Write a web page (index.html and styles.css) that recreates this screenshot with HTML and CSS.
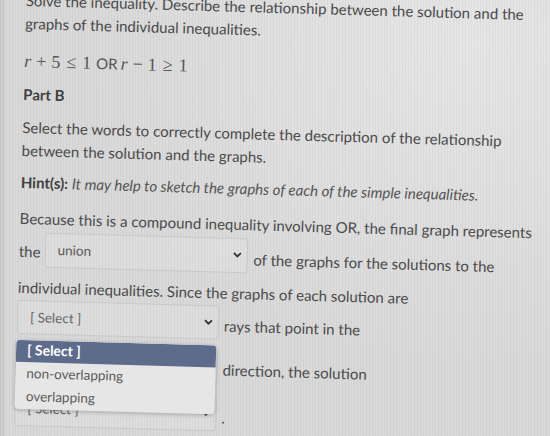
FILE: index.html
```html
<!DOCTYPE html>
<html lang="en">
<head>
<meta charset="utf-8">
<title>Part B</title>
<link rel="stylesheet" href="styles.css">
</head>
<body>
<div class="page">
  <p class="intro">Solve the inequality. Describe the relationship between the solution and the graphs of the individual inequalities.</p>
  <p class="math"><i>r</i><span class="op">+</span>5<span class="rel">≤</span>1<span class="or">OR</span><i>r</i><span class="op">−</span>1<span class="rel">≥</span>1</p>
  <h3 class="part">Part B</h3>
  <p class="instr">Select the words to correctly complete the description of the relationship between the solution and the graphs.</p>
  <p class="hint"><b>Hint(s):</b> <i>It may help to sketch the graphs of each of the simple inequalities.</i></p>
  <p class="because">Because this is a compound inequality involving OR, the final graph represents</p>
  <div class="row row1">
    <span class="lead">the</span>
    <div class="select sel1"><span>union</span><svg class="chev" width="9" height="6" viewBox="0 0 9 6"><polyline points="1,1 4.5,4.5 8,1" fill="none" stroke="#333" stroke-width="1.8"/></svg></div>
    <span class="after1">of the graphs for the solutions to the</span>
  </div>
  <p class="ind">individual inequalities. Since the graphs of each solution are</p>
  <div class="row row2">
    <div class="select-wrap">
      <div class="select"><span class="ph">[ Select ]</span><svg class="chev" width="9" height="6" viewBox="0 0 9 6"><polyline points="1,1 4.5,4.5 8,1" fill="none" stroke="#333" stroke-width="1.8"/></svg></div>
      <ul class="list">
        <li class="head">[ Select ]</li>
        <li>non-overlapping</li>
        <li>overlapping</li>
      </ul>
    </div>
    <span>rays that point in the</span>
  </div>
  <div class="row row3">
    <div class="select"><span class="ph">[ Select ]</span><svg class="chev" width="9" height="6" viewBox="0 0 9 6"><polyline points="1,1 4.5,4.5 8,1" fill="none" stroke="#333" stroke-width="1.8"/></svg></div>
    <span>direction, the solution</span>
  </div>
  <div class="row row4">
    <div class="select"><span class="ph">[ Select ]</span><svg class="chev" width="9" height="6" viewBox="0 0 9 6"><polyline points="1,1 4.5,4.5 8,1" fill="none" stroke="#333" stroke-width="1.8"/></svg></div>
    <span>.</span>
  </div>
</div>
</body>
</html>
```

FILE: styles.css
```css
html, body {
  margin: 0;
  height: 100%;
}

body {
  overflow: hidden;
  background-color: #d9d9d9;
  background-image:
    linear-gradient(90deg, rgba(0,0,0,0.05) 0 5px, transparent 5px),
    repeating-linear-gradient(90deg, rgba(0,0,0,0.035) 0 1px, transparent 1px 3px),
    radial-gradient(ellipse at 85% 10%, rgba(255,255,255,0.35), transparent 60%);
  font-family: Lato, "Noto Sans", sans-serif;
  font-size: 15px;
  color: #4a4a4a;
}

.page {
  width: 550px;
  height: 440px;
  box-sizing: border-box;
  padding: 0 14px 0 20px;
  line-height: 23px;
  transform: rotate(1.6deg);
  transform-origin: 275px 218px;
}

p {
  margin: 0;
}

.intro {
  margin-top: -4px;
}

.math {
  margin-top: 14.5px;
  font-family: "Liberation Serif", "DejaVu Serif", serif;
  font-size: 18px;
  color: #555;
}

.math i {
  font-style: italic;
}

.math .op {
  margin: 0 5px;
}

.math .rel {
  margin: 0 6px;
}

.math .or {
  font-family: Lato, sans-serif;
  font-size: 15px;
  margin: 0 3px 0 5px;
}

.part {
  margin: 10px 0 0;
  font-size: 15px;
  font-weight: 700;
  line-height: 23px;
  color: #3f3f3f;
}

.instr {
  margin-top: 10.5px;
}

.hint {
  margin-top: 9px;
}

.hint b {
  font-weight: 700;
  color: #3f3f3f;
}

.hint i {
  color: #555;
}

.because {
  margin-top: 12.5px;
}

.row {
  display: flex;
  align-items: flex-end;
  gap: 5px;
}

.row > span {
  padding-bottom: 2px;
}

.row1 {
  margin-top: 2.5px;
  gap: 4px;
}

.row1 .lead {
  padding-bottom: 4px;
}

.row1 .after1 {
  margin-left: 2px;
}

.ind {
  margin-top: 9px;
}

.row2 {
  margin-top: 1px;
}

.row3 {
  margin-top: 9.5px;
}

.row4 {
  margin-top: 13px;
}

.select {
  width: 202px;
  height: 34.5px;
  box-sizing: border-box;
  border: 1px solid #c9c9c9;
  border-radius: 3px;
  background: rgba(255,255,255,0.12);
  display: flex;
  align-items: center;
  padding: 0 5px 0 12px;
  font-size: 13.5px;
  line-height: 16px;
  color: #585858;
}

.sel1 {
  width: 203px;
}

.select .ph {
  color: #666;
}

.select .chev {
  margin-left: auto;
  flex: none;
}

.select-wrap {
  position: relative;
}

.list {
  position: absolute;
  top: 40px;
  left: 0;
  width: 200px;
  margin: 0;
  padding: 0;
  list-style: none;
  background: #e6e6e6;
  border-radius: 4px;
  box-shadow: 0 1px 4px rgba(0,0,0,0.25);
  overflow: hidden;
  z-index: 2;
}

.list li {
  height: 23.5px;
  line-height: 22px;
  padding-left: 11px;
  font-size: 13.5px;
  color: #5a5a5a;
}

.list .head {
  height: 22px;
  line-height: 19px;
  background: #5d6c8b;
  color: #fff;
  font-weight: 700;
  font-size: 14px;
}
```
